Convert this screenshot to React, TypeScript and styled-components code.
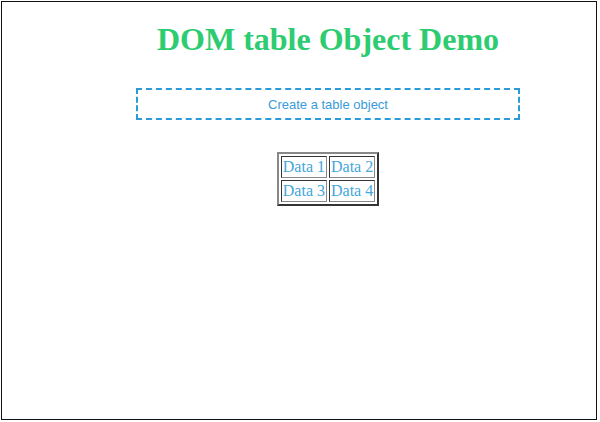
import styled, { createGlobalStyle } from 'styled-components';

const GlobalStyle = createGlobalStyle`
  html, body {
    margin: 0;
    padding: 0;
    background: #ffffff;
  }
  body {
    font-family: 'Liberation Serif', 'Times New Roman', serif;
  }
`;

const Frame = styled.div`
  box-sizing: border-box;
  margin: 1px 0 0 1px;
  width: 596px;
  height: 419px;
  border: 1px solid #111111;
  padding-left: 58px;
`;

const Content = styled.main`
  display: flex;
  flex-direction: column;
  align-items: center;
`;

const Title = styled.h1`
  margin: 17px 0 0;
  font-family: 'Liberation Serif', 'Times New Roman', serif;
  font-size: 32px;
  font-weight: bold;
  color: #2ecc71;
  line-height: 40px;
`;

const CreateButton = styled.button`
  box-sizing: border-box;
  margin-top: 29px;
  width: 384px;
  height: 32px;
  background: #ffffff;
  border: 2px dashed #2a9bd8;
  color: #3a9ad9;
  font-family: 'Liberation Sans', Arial, sans-serif;
  font-size: 13px;
  cursor: pointer;
`;

const DataTable = styled.table`
  margin-top: 32px;
  border: 2px outset #888888;
  border-spacing: 2px;
`;

const Cell = styled.td`
  border: 1px inset #888888;
  padding: 1px;
  color: #45a6da;
  font-family: 'Liberation Serif', 'Times New Roman', serif;
  font-size: 16px;
  line-height: 18px;
`;

const rows = [
  ['Data 1', 'Data 2'],
  ['Data 3', 'Data 4'],
];

const App = () => {
  return (
    <>
      <GlobalStyle />
      <Frame>
        <Content>
          <Title>DOM table Object Demo</Title>
          <CreateButton>Create a table object</CreateButton>
          <DataTable>
            <tbody>
              {rows.map((row) => (
                <tr key={row[0]}>
                  {row.map((cell) => (
                    <Cell key={cell}>{cell}</Cell>
                  ))}
                </tr>
              ))}
            </tbody>
          </DataTable>
        </Content>
      </Frame>
    </>
  );
};

export default App;
